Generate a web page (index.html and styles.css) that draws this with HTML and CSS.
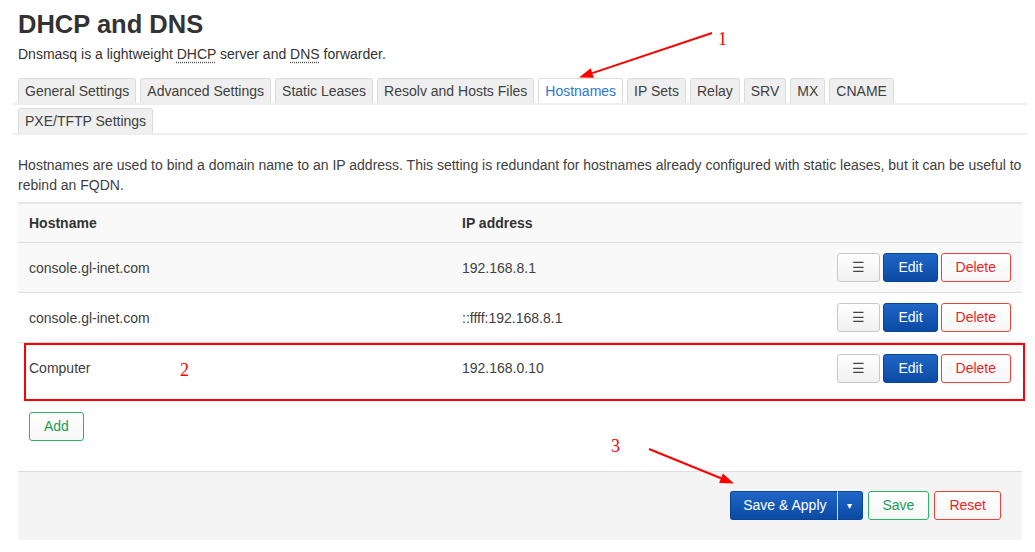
FILE: index.html
```html
<!DOCTYPE html>
<html lang="en">
<head>
<meta charset="utf-8">
<title>DHCP and DNS</title>
<link rel="stylesheet" href="styles.css">
</head>
<body>
<div class="page">
  <h2 class="title">DHCP and DNS</h2>
  <div class="subtitle">Dnsmasq is a lightweight <abbr class="abbr">DHCP</abbr> server and <abbr class="abbr">DNS</abbr> forwarder.</div>

  <ul class="tabs">
    <li class="tab">General Settings</li>
    <li class="tab">Advanced Settings</li>
    <li class="tab">Static Leases</li>
    <li class="tab">Resolv and Hosts Files</li>
    <li class="tab active">Hostnames</li>
    <li class="tab">IP Sets</li>
    <li class="tab">Relay</li>
    <li class="tab">SRV</li>
    <li class="tab">MX</li>
    <li class="tab">CNAME</li>
  </ul>
  <ul class="tabs second">
    <li class="tab">PXE/TFTP Settings</li>
  </ul>

  <p class="desc">Hostnames are used to bind a domain name to an IP address. This setting is redundant for hostnames already configured with static leases, but it can be useful to rebind an FQDN.</p>

  <div class="table">
    <div class="tr head">
      <div class="td">Hostname</div>
      <div class="td">IP address</div>
      <div class="td"></div>
    </div>
    <div class="tr odd">
      <div class="td">console.gl-inet.com</div>
      <div class="td">192.168.8.1</div>
      <div class="td actions">
        <button class="btn menu">&#9776;</button>
        <button class="btn edit">Edit</button>
        <button class="btn del">Delete</button>
      </div>
    </div>
    <div class="tr">
      <div class="td">console.gl-inet.com</div>
      <div class="td">::ffff:192.168.8.1</div>
      <div class="td actions">
        <button class="btn menu">&#9776;</button>
        <button class="btn edit">Edit</button>
        <button class="btn del">Delete</button>
      </div>
    </div>
    <div class="tr last">
      <div class="td">Computer</div>
      <div class="td">192.168.0.10</div>
      <div class="td actions">
        <button class="btn menu">&#9776;</button>
        <button class="btn edit">Edit</button>
        <button class="btn del">Delete</button>
      </div>
    </div>
  </div>

  <div class="add-row">
    <button class="btn add">Add</button>
  </div>

  <div class="footer">
    <div class="split">
      <button class="btn primary main">Save &amp; Apply</button>
      <button class="btn primary drop">&#9662;</button>
    </div>
    <button class="btn save">Save</button>
    <button class="btn reset">Reset</button>
  </div>

  <svg class="annot" width="1035" height="552" viewBox="0 0 1035 552">
    <line x1="712" y1="33" x2="592.3" y2="73.1" stroke="#f00" stroke-width="2"/>
    <polygon points="579,77.5 593.9,77.8 590.7,68.3" fill="#f00"/>
    <text x="718" y="45" class="num">1</text>
    <rect x="25" y="344" width="999" height="56" fill="none" stroke="#f00" stroke-width="2"/>
    <text x="180" y="376" class="num">2</text>
    <text x="611" y="452" class="num">3</text>
    <line x1="649" y1="449" x2="721" y2="478.2" stroke="#f00" stroke-width="2"/>
    <polygon points="734,483.5 719.1,482.9 722.9,473.6" fill="#f00"/>
  </svg>
</div>
</body>
</html>
```

FILE: styles.css
```css
* {
  box-sizing: border-box;
}

body {
  margin: 0;
  background: #fff;
  font-family: "Liberation Sans", Arial, sans-serif;
  font-size: 14px;
  color: #404040;
}

.page {
  position: relative;
  width: 1035px;
  height: 552px;
  padding: 9px 13px 0 18px;
  overflow: hidden;
}

.title {
  margin: 0;
  font-size: 25.5px;
  line-height: 30px;
  font-weight: bold;
  color: #333;
}

.subtitle {
  margin-top: 5px;
  line-height: 20px;
  color: #333;
}

.abbr {
  text-decoration: underline dotted #555;
  text-underline-offset: 3px;
}

.tabs {
  list-style: none;
  display: flex;
  gap: 4px;
  margin: 14px -5px 0 -5px;
  padding: 0 0 0 5px;
  border-bottom: 2px solid #eee;
}

.tabs.second {
  margin-top: 3px;
}

.tab {
  padding: 4px 6px 3px;
  line-height: 17px;
  background: #efefef;
  border: 1px solid #dcdcdc;
  border-bottom: 0;
  border-radius: 3px 3px 0 0;
  color: #404040;
  white-space: nowrap;
}

.tab.active {
  background: #fff;
  color: #2a78d0;
}

.desc {
  margin: 20px 0 0;
  line-height: 20px;
  color: #404040;
}

.table {
  margin-top: 7px;
  border-top: 2px solid #e6e6e6;
}

.tr {
  display: grid;
  grid-template-columns: 433px 1fr auto;
  align-items: center;
  min-height: 50px;
  border-bottom: 1px solid #ddd;
  background: #fff;
}

.tr.head {
  min-height: 39px;
  background: #f9f9f9;
  font-weight: bold;
  color: #333;
}

.tr.odd {
  background: #f9f9f9;
}

.tr.last {
  border-bottom: 0;
}

.td {
  padding: 0 11px;
}

.actions {
  display: flex;
  gap: 3px;
}

.btn {
  height: 29px;
  padding: 0 14px;
  border: 1px solid #ccc;
  border-radius: 3px;
  background: #fff;
  font-family: "Liberation Sans", Arial, sans-serif;
  font-size: 14px;
  line-height: 27px;
  color: #404040;
  white-space: nowrap;
  cursor: pointer;
}

.btn.menu {
  background: linear-gradient(#fff, #f0f0f0);
  border-color: #c8c8c8;
  color: #444;
}

.btn.edit,
.btn.primary {
  background: linear-gradient(#1f66c6, #0b4aa3);
  border-color: #0a4497;
  color: #fff;
}

.btn.del,
.btn.reset {
  background: linear-gradient(#fff, #f7f7f7);
  border-color: #f0413a;
  color: #f0231b;
}

.btn.add,
.btn.save {
  background: linear-gradient(#fff, #f7f7f7);
  border-color: #2bb36a;
  color: #1f9c52;
}

.add-row {
  padding: 19px 11px 0;
}

.footer {
  display: flex;
  justify-content: flex-end;
  gap: 5px;
  margin-top: 30px;
  padding: 19px 21px 20px;
  background: #f4f4f4;
  border-top: 1px solid #ddd;
  border-radius: 0 0 3px 3px;
}

.split {
  display: flex;
}

.btn.main {
  padding: 0 10px 0 12px;
  border-radius: 3px 0 0 3px;
  border-right: 0;
}

.btn.drop {
  width: 26px;
  padding: 0;
  border-radius: 0 3px 3px 0;
  border-left: 1px solid #c9daf2;
  font-size: 10px;
}

.annot {
  position: absolute;
  left: 0;
  top: 0;
  pointer-events: none;
}

.num {
  font-family: "Liberation Serif", "Times New Roman", serif;
  font-size: 18px;
  fill: #f00;
}
```
